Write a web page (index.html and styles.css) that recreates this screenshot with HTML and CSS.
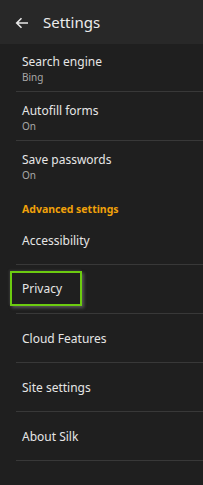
FILE: index.html
```html
<!DOCTYPE html>
<html>
<head>
<meta charset="utf-8">
<link rel="stylesheet" href="styles.css">
</head>
<body>
<div class="app">
  <header class="topbar">
    <svg class="back" width="14" height="12" viewBox="0 0 14 12"><path d="M13 6H2M6.5 1.2L1.7 6l4.8 4.8" fill="none" stroke="#e8e8e8" stroke-width="1.6"/></svg>
    <span class="title">Settings</span>
  </header>
  <ul class="list">
    <li class="row two"><span class="label">Search engine</span><span class="sub">Bing</span></li>
    <li class="row two"><span class="label">Autofill forms</span><span class="sub">On</span></li>
    <li class="row two noline"><span class="label">Save passwords</span><span class="sub">On</span></li>
    <li class="section">Advanced settings</li>
    <li class="row"><span class="label">Accessibility</span></li>
    <li class="row"><span class="label focus">Privacy</span></li>
    <li class="row"><span class="label">Cloud Features</span></li>
    <li class="row"><span class="label">Site settings</span></li>
    <li class="row"><span class="label">About Silk</span></li>
  </ul>
</div>
</body>
</html>
```
FILE: styles.css
```css
html, body {
  margin: 0;
  padding: 0;
  background: #1f1f1f;
}
body {
  font-family: "Noto Sans", "Liberation Sans", sans-serif;
  color: #e6e6e6;
}
.app {
  width: 203px;
  height: 485px;
  background: #1f1f1f;
}
.topbar {
  height: 44px;
  background: #282828;
  display: flex;
  align-items: center;
  padding-left: 15px;
  box-sizing: border-box;
}
.back {
  display: block;
  margin-top: 1px;
}
.title {
  margin-left: 14px;
  font-size: 15px;
  color: #ececec;
}
.list {
  list-style: none;
  margin: 0;
  padding: 0 0 0 16px;
}
.row {
  height: 49px;
  box-sizing: border-box;
  border-bottom: 1px solid #383838;
  display: flex;
  flex-direction: column;
  justify-content: center;
  padding-left: 6px;
}
.row:first-child {
  height: 48px;
}
.row.two {
  padding-top: 2px;
}
.row.noline {
  border-bottom-color: transparent;
}
.label {
  font-size: 12px;
  line-height: 17px;
  color: #e6e6e6;
}
.sub {
  font-size: 10px;
  line-height: 14px;
  color: #a8a8a8;
}
.section {
  height: 26px;
  padding-left: 6px;
  font-size: 10.5px;
  line-height: 14px;
  font-weight: bold;
  color: #f0a10a;
  display: flex;
  align-items: flex-end;
  box-sizing: border-box;
}
.focus {
  align-self: flex-start;
  margin-left: -12px;
  margin-bottom: 2px;
  height: 35px;
  width: 72px;
  box-sizing: border-box;
  border: 2px solid #6ccb10;
  padding-left: 10px;
  padding-top: 1px;
  display: flex;
  align-items: center;
  box-shadow: 2px 2px 3px rgba(120, 120, 120, 0.6), -1px -1px 2px rgba(90, 90, 90, 0.4);
}
```
